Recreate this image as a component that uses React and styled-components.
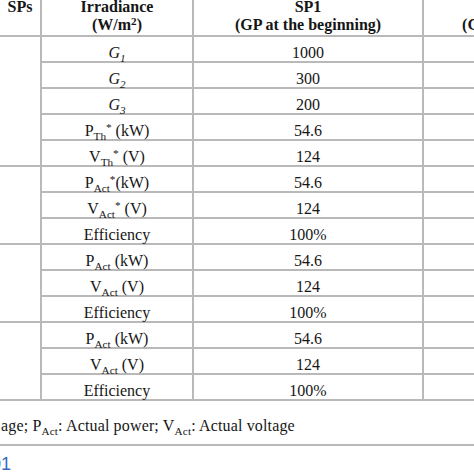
import React from 'react';
import styled, { createGlobalStyle } from 'styled-components';

const LINE = '#b9b9b9';

const Global = createGlobalStyle`
  html, body { margin: 0; padding: 0; background: #ffffff; }
  body {
    width: 474px;
    height: 474px;
    overflow: hidden;
    font-family: "Liberation Serif", "Times New Roman", serif;
    color: #161616;
  }
`;

const Page = styled.div`
  width: 474px;
  height: 474px;
  overflow: hidden;
`;

const Grid = styled.div`
  display: grid;
  grid-template-columns: 42px 152px 230px 202px;
  grid-template-rows: 37px repeat(14, 26px);
  width: 626px;
`;

const HeadCell = styled.div`
  box-sizing: border-box;
  display: flex;
  flex-direction: column;
  justify-content: flex-end;
  align-items: center;
  border-bottom: 2px solid ${LINE};
  border-right: ${(p) => (p.$last ? 'none' : `2px solid ${LINE}`)};
  padding-bottom: ${(p) => (p.$top ? '19px' : '1px')};
  font-size: 16px;
  font-weight: bold;
  line-height: 18px;
  text-align: center;
  white-space: nowrap;
`;

const GroupCell = styled.div`
  box-sizing: border-box;
  grid-row: span ${(p) => p.$span};
  border-bottom: 2px solid ${LINE};
  border-right: 2px solid ${LINE};
`;

const Cell = styled.div`
  box-sizing: border-box;
  border-bottom: 2px solid ${LINE};
  border-right: ${(p) => (p.$last ? 'none' : `2px solid ${LINE}`)};
  padding-top: 7px;
  font-size: 16px;
  line-height: 17px;
  text-align: center;
  white-space: nowrap;
`;

const Sub = styled.sub`
  font-size: 0.7em;
  line-height: 0;
  vertical-align: -0.32em;
`;

const Sup = styled.sup`
  font-size: 0.7em;
  line-height: 0;
  vertical-align: 0.42em;
`;

const Ital = styled.i`
  font-style: italic;
`;

const Note = styled.p`
  box-sizing: border-box;
  margin: 0;
  height: 45px;
  padding: 15px 0 8px 1px;
  border-bottom: 2px solid ${LINE};
  font-size: 16px;
  line-height: 20px;
  letter-spacing: 0.15px;
  white-space: nowrap;
`;

const DoiLink = styled.a`
  display: block;
  margin-top: 8px;
  font-family: "Liberation Sans", Arial, sans-serif;
  font-size: 18px;
  line-height: 20px;
  color: #3a6bc4;
  text-decoration: none;
  text-indent: -9px;
  white-space: nowrap;
`;

const G = ({ n }) => (
  <Ital>
    G<Sub>{n}</Sub>
  </Ital>
);

const groups = [
  [
    [<G n="1" />, '1000'],
    [<G n="2" />, '300'],
    [<G n="3" />, '200'],
    [<>P<Sub>Th</Sub><Sup>*</Sup> (kW)</>, '54.6'],
    [<>V<Sub>Th</Sub><Sup>*</Sup> (V)</>, '124'],
  ],
  [
    [<>P<Sub>Act</Sub><Sup>*</Sup>(kW)</>, '54.6'],
    [<>V<Sub>Act</Sub><Sup>*</Sup> (V)</>, '124'],
    ['Efficiency', '100%'],
  ],
  [
    [<>P<Sub>Act</Sub> (kW)</>, '54.6'],
    [<>V<Sub>Act</Sub> (V)</>, '124'],
    ['Efficiency', '100%'],
  ],
  [
    [<>P<Sub>Act</Sub> (kW)</>, '54.6'],
    [<>V<Sub>Act</Sub> (V)</>, '124'],
    ['Efficiency', '100%'],
  ],
];

export default function App() {
  return (
    <Page>
      <Global />
      <Grid>
        <HeadCell $top>SPs</HeadCell>
        <HeadCell>
          <span>Irradiance</span>
          <span>
            (W/m<Sup>2</Sup>)
          </span>
        </HeadCell>
        <HeadCell>
          <span>SP1</span>
          <span>(GP at the beginning)</span>
        </HeadCell>
        <HeadCell $last>
          <span>SP2</span>
          <span>(GP in the middle)</span>
        </HeadCell>
        {groups.map((rows, gi) =>
          rows.map((row, ri) => (
            <React.Fragment key={`${gi}-${ri}`}>
              {ri === 0 && <GroupCell $span={rows.length} />}
              <Cell>{row[0]}</Cell>
              <Cell>{row[1]}</Cell>
              <Cell $last />
            </React.Fragment>
          ))
        )}
      </Grid>
      <Note>
        age; P<Sub>Act</Sub>: Actual power; V<Sub>Act</Sub>: Actual voltage
      </Note>
      <DoiLink href="#">01</DoiLink>
    </Page>
  );
}
